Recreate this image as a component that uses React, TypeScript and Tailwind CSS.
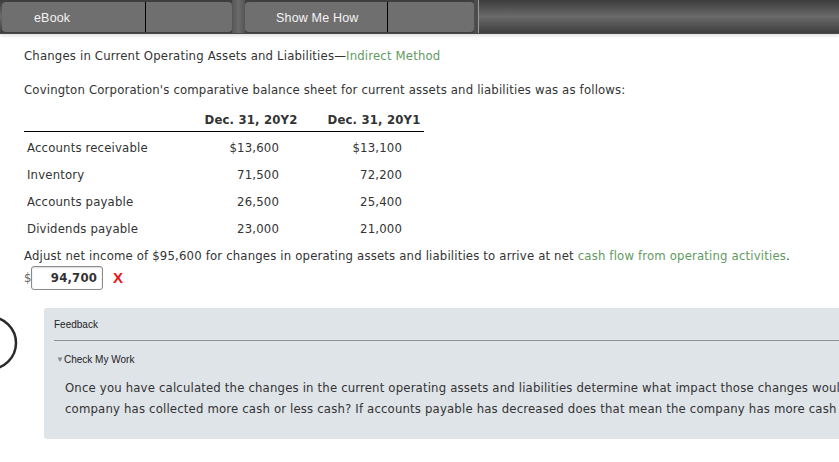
import React from "react";

const body = { fontFamily: "'DejaVu Sans Condensed', 'DejaVu Sans', Verdana, sans-serif" };
const arial = { fontFamily: "'Liberation Sans', Arial, sans-serif" };

const rows = [
    ["Accounts receivable", "$13,600", "$13,100"],
    ["Inventory", "71,500", "72,200"],
    ["Accounts payable", "26,500", "25,400"],
    ["Dividends payable", "23,000", "21,000"],
];

const TopBar = () => (
    <div
        className="h-[34px] flex items-stretch border-b border-[#4a4a4a] shadow-[0_2px_3px_rgba(0,0,0,0.12)] bg-[linear-gradient(#3c3c3c,#6a6a6a_50%,#3e3e3e)]"
        style={arial}
    >
        <div className="w-[2px]" />
        <div className="mt-[2px] mb-[1px] flex rounded-[4px] bg-[#6f6f6f]">
            <div className="w-[144px] pl-[32px] pt-[2px] flex items-center text-[12.5px] text-[#f4f4f4] border-r border-black">eBook</div>
            <div className="w-[86px]" />
        </div>
        <div className="w-[13px] bg-[linear-gradient(90deg,#555,#6a6a6a_50%,#555)]" />
        <div className="mt-[2px] mb-[1px] flex rounded-[4px] bg-[#6f6f6f]">
            <div className="w-[143px] pl-[31px] pt-[2px] flex items-center text-[12.5px] text-[#f4f4f4] border-r border-black">Show Me How</div>
            <div className="w-[86px]" />
        </div>
        <div className="w-[4px] bg-[#4c4c4c]" />
        <div className="w-px bg-[#9a9a9a]" />
        <div className="flex-1" />
    </div>
);

export default function App() {
    return (
        <div className="relative w-[839px] h-[462px] overflow-hidden bg-white text-[13px] tracking-[0.17px] text-[#333]" style={body}>
            <TopBar />

            <div className="pl-[24px]">
                <p className="mt-[14px] leading-[16px]">
                    Changes in Current Operating Assets and Liabilities—<span className="text-[#5f9a62]">Indirect Method</span>
                </p>
                <p className="mt-[18px] leading-[16px]">
                    Covington Corporation's comparative balance sheet for current assets and liabilities was as follows:
                </p>

                <div className="mt-[10px] w-[400px]">
                    <div className="flex h-[24px] items-center border-b border-black font-bold">
                        <div className="w-[154px]" />
                        <div className="w-[146px] text-center">Dec. 31, 20Y2</div>
                        <div className="w-[100px] text-center">Dec. 31, 20Y1</div>
                    </div>
                    <div className="mt-[2px]">
                        {rows.map(([label, a, b]) => (
                            <div key={label} className="flex h-[27px] items-center">
                                <div className="w-[154px] pl-[3px]">{label}</div>
                                <div className="w-[146px] text-right pr-[45px]">{a}</div>
                                <div className="w-[100px] text-right pr-[22px]">{b}</div>
                            </div>
                        ))}
                    </div>
                </div>

                <p className="mt-[6px] leading-[16px]">
                    Adjust net income of $95,600 for changes in operating assets and liabilities to arrive at net{" "}
                    <span className="text-[#5f9a62]">cash flow from operating activities</span>.
                </p>

                <div className="mt-[2px] flex items-center h-[24px]">
                    <span className="text-[#666] w-[7px]">$</span>
                    <div className="w-[72px] h-[24px] rounded-[3px] border border-[#8a8a8a] shadow-[inset_0_1px_2px_rgba(0,0,0,0.15)] flex items-center justify-end pr-[5px] font-bold text-[#333]">
                        94,700
                    </div>
                    <span className="ml-[10px] text-[15px] font-bold text-[#e8141a]" style={arial}>X</span>
                </div>
            </div>

            <svg className="absolute left-0 top-[313px]" width="20" height="62" viewBox="0 0 20 62">
                <circle cx="-10" cy="30" r="26" fill="none" stroke="#2a2a2a" strokeWidth="2.5" />
            </svg>

            <div className="ml-[44px] mt-[18px] w-[900px] rounded-[3px] bg-[#dfe4e9] pl-[10px] pt-[11px] pb-[20px]">
                <div className="text-[10px] leading-[12px] tracking-normal text-[#222]" style={arial}>Feedback</div>
                <div className="mt-[9px] h-px bg-[#8f9396]" />
                <div className="mt-[13px] flex items-center text-[10px] leading-[12px] tracking-normal text-[#222]" style={arial}>
                    <span className="w-[10px] pl-[2px] text-[8px] text-[#888]">▼</span>
                    <span>Check My Work</span>
                </div>
                <div className="mt-[11px] pl-[11px] leading-[21px] whitespace-nowrap">
                    <div>Once you have calculated the changes in the current operating assets and liabilities determine what impact those changes would</div>
                    <div>company has collected more cash or less cash? If accounts payable has decreased does that mean the company has more cash</div>
                </div>
            </div>
        </div>
    );
}
